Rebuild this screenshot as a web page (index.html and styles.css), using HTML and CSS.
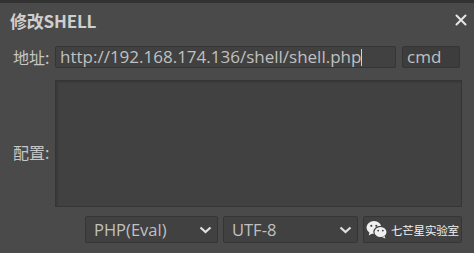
FILE: index.html
```html
<!DOCTYPE html>
<html>
<head>
<meta charset="utf-8">
<link rel="stylesheet" href="styles.css">
</head>
<body>
<div class="dialog">
  <div class="header">
    <span class="title">修改SHELL</span>
    <span class="close">
      <svg width="12" height="12" viewBox="0 0 12 12"><path d="M1.5 1.5 L10.5 10.5 M10.5 1.5 L1.5 10.5" stroke="#e6e6e6" stroke-width="2" stroke-linecap="round"/></svg>
    </span>
  </div>
  <div class="row row-url">
    <label class="label">地址:</label>
    <div class="input url">http://192.168.174.136/shell/shell.php<span class="caret"></span></div>
    <div class="input cmd">cmd</div>
  </div>
  <div class="row row-config">
    <label class="label label-config">配置:</label>
    <div class="textarea"></div>
  </div>
  <div class="row row-selects">
    <div class="select s1"><span>PHP(Eval)</span>
      <svg class="chev" width="13" height="8" viewBox="0 0 13 8"><path d="M1.5 1.5 L6.5 6 L11.5 1.5" fill="none" stroke="#e0e0e0" stroke-width="2.2"/></svg>
    </div>
    <div class="select s2"><span>UTF-8</span>
      <svg class="chev" width="13" height="8" viewBox="0 0 13 8"><path d="M1.5 1.5 L6.5 6 L11.5 1.5" fill="none" stroke="#e0e0e0" stroke-width="2.2"/></svg>
    </div>
    <div class="select s3">
      <svg class="wx" width="22" height="19" viewBox="0 0 22 19">
        <ellipse cx="8" cy="7.5" rx="7.5" ry="6.5" fill="#f0f0f0"/>
        <path d="M3.5 12 L2.8 15.5 L6.5 13.3 Z" fill="#f0f0f0"/>
        <circle cx="5.3" cy="5.8" r="1.1" fill="#444"/>
        <circle cx="10.3" cy="5.8" r="1.1" fill="#444"/>
        <ellipse cx="14.5" cy="12" rx="6.6" ry="5.7" fill="#f0f0f0" stroke="#444" stroke-width="1.2"/>
        <path d="M18.5 16 L19.5 18.6 L16.3 17.2 Z" fill="#f0f0f0"/>
        <circle cx="12.2" cy="10.6" r="0.95" fill="#444"/>
        <circle cx="16.8" cy="10.6" r="0.95" fill="#444"/>
      </svg>
      <span class="wm">七芒星实验室</span>
    </div>
  </div>
</div>
</body>
</html>
```
FILE: styles.css
```css
html, body {
  margin: 0;
  padding: 0;
  background: #4a4a4a;
}
body {
  width: 474px;
  height: 253px;
  overflow: hidden;
  font-family: "Open Sans", "Noto Sans CJK SC", sans-serif;
  color: #c0c0c0;
}
.dialog {
  width: 474px;
  height: 253px;
  box-sizing: border-box;
  border-top: 3px solid #323232;
  background: #4a4a4a;
}
.header {
  height: 34px;
  display: flex;
  align-items: center;
  justify-content: space-between;
  padding: 0 7px 0 10px;
}
.title {
  font-family: "Noto Sans CJK SC", sans-serif;
  font-weight: bold;
  font-size: 17px;
  color: #cfcfcf;
  letter-spacing: -0.2px;
}
.close {
  display: flex;
  width: 12px;
  height: 12px;
}
.row {
  display: flex;
}
.label {
  width: 55px;
  box-sizing: border-box;
  padding-left: 13px;
  font-family: "Noto Sans CJK SC", sans-serif;
  font-size: 16px;
  color: #c6c6c6;
  display: flex;
  align-items: center;
}
.row-url {
  margin-top: 9px;
  height: 22px;
}
.input {
  box-sizing: border-box;
  height: 22px;
  background: #414141;
  border: 1px solid #353535;
  border-radius: 2px;
  font-size: 17px;
  line-height: 20px;
  color: #c0c0c0;
  white-space: nowrap;
  overflow: hidden;
}
.url {
  width: 341px;
  padding-left: 4px;
}
.caret {
  display: inline-block;
  width: 1px;
  height: 17px;
  background: #d0d0d0;
  vertical-align: -3px;
}
.cmd {
  width: 58px;
  margin-left: 6px;
  padding-left: 4px;
  background: #3d3d3d;
}
.row-config {
  margin-top: 12px;
  height: 127px;
}
.label-config {
  padding-top: 17px;
}
.textarea {
  width: 407px;
  height: 127px;
  box-sizing: border-box;
  background: #414141;
  border: 1px solid #353535;
  box-shadow: inset 2px 2px 0 #3a3a3a;
}
.row-selects {
  margin-top: 9px;
  height: 27px;
  padding-left: 85px;
  gap: 5px;
}
.select {
  box-sizing: border-box;
  height: 27px;
  background: #414141;
  border: 1px solid #353535;
  border-radius: 2px;
  display: flex;
  align-items: center;
  justify-content: space-between;
  font-size: 16.5px;
  color: #c0c0c0;
  padding: 0 5px 0 8px;
}
.s1 { width: 133px; }
.s2 { width: 135px; }
.s3 {
  width: 99px;
  padding: 0 0 0 2px;
  justify-content: flex-start;
  gap: 3px;
}
.chev { display: block; }
.wx { display: block; }
.wm {
  font-family: "Noto Sans CJK SC", sans-serif;
  font-size: 11.5px;
  color: #f0f0f0;
  letter-spacing: -0.2px;
}
```
